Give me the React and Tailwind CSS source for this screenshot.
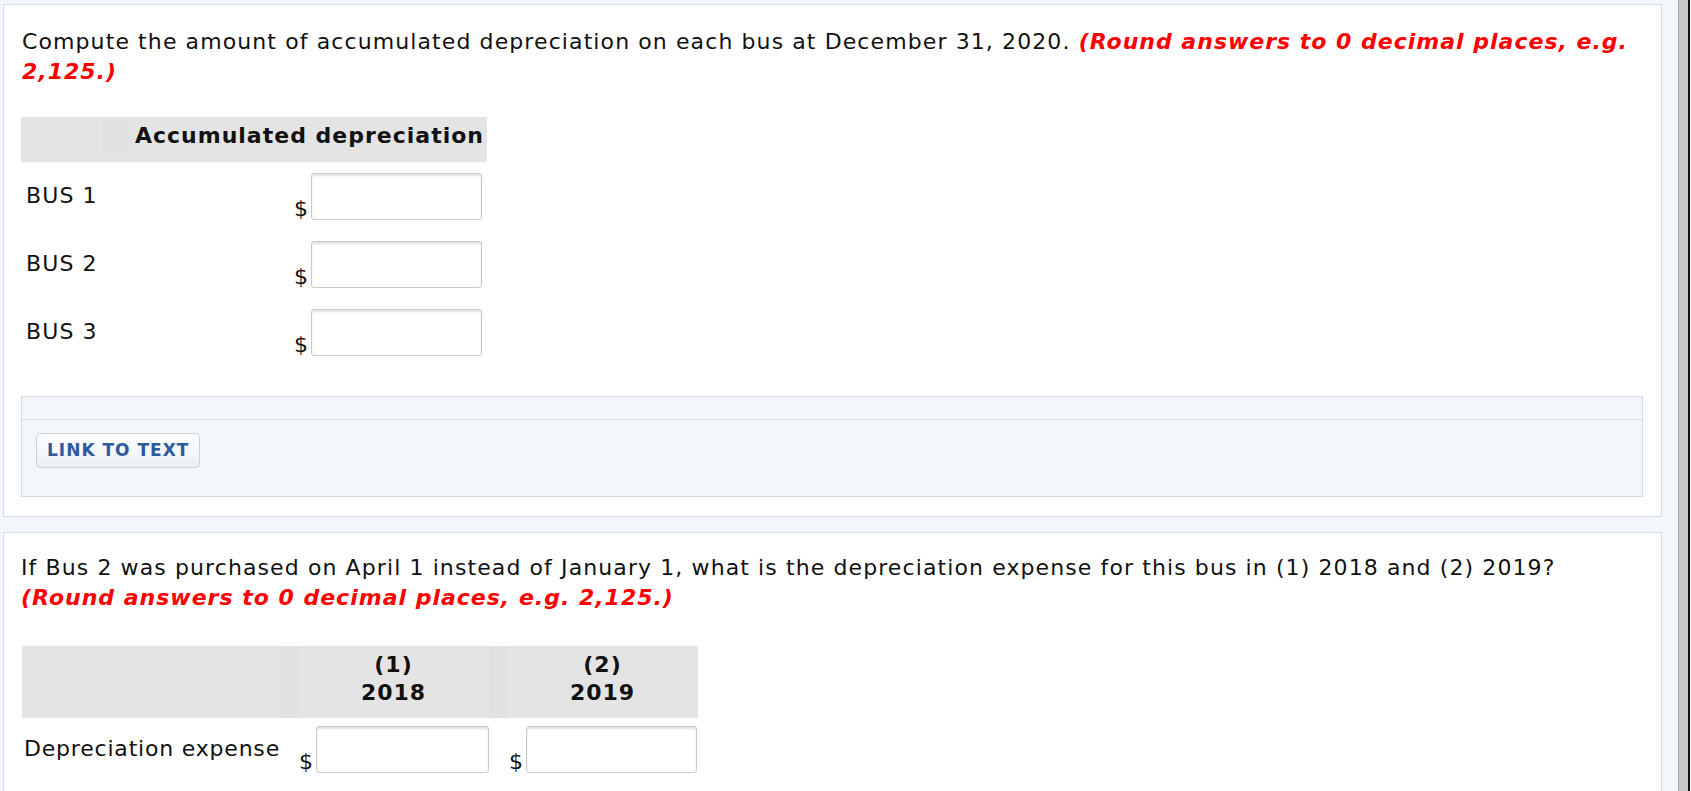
export default function App() {
  const Input = ({ w }) => (
    <div
      className={`h-[47px] ${w} rounded-[3px] border border-[#c9c9c9] bg-white shadow-[inset_0_2px_2px_rgba(0,0,0,0.12)]`}
    />
  );
  const Dollar = () => <span className="w-[14px] leading-none tracking-normal">$</span>;

  return (
    <div className="flex h-[791px] w-[1691px] overflow-hidden bg-[#f4f7fa] font-['DejaVu_Sans',Verdana,sans-serif] text-[22px] leading-[30px] tracking-[1.1px] text-[#111]">
      <div className="flex min-w-0 flex-1 flex-col gap-[15px] pl-[3px] pr-[16px] pt-[4px]">
        {/* Panel 1 */}
        <div className="border border-[#d5dde7] bg-white pb-[19px] pl-[17px] pr-[18px] pt-[22px]">
          <p className="pl-[1px]">
            <span className="whitespace-nowrap">
              Compute the amount of accumulated depreciation on each bus at December 31, 2020.{" "}
              <span className="font-bold italic tracking-[1px] text-[#ff0000]">
                (Round answers to 0 decimal places, e.g.
              </span>
            </span>
            <br />
            <span className="font-bold italic tracking-[1px] text-[#ff0000]">2,125.)</span>
          </p>

          <div className="mt-[30px] w-[466px]">
            <div className="flex bg-[#e4e4e4] pb-[12px] pt-[5px] font-bold leading-[28px] tracking-[1px]">
              <div className="w-[82px]" />
              <div className="w-[25px] bg-[#e1e1e1]" />
              <div className="flex-1 pr-[3px] text-right">Accumulated depreciation</div>
            </div>
            {["BUS 1", "BUS 2", "BUS 3"].map((b) => (
              <div key={b} className="flex h-[68px] items-center">
                <div className="w-[273px] shrink-0 pl-[5px]">{b}</div>
                <div className="flex shrink-0 items-end">
                  <Dollar />
                  <div className="ml-[3px]">
                    <Input w="w-[171px]" />
                  </div>
                </div>
              </div>
            ))}
          </div>

          <div className="mt-[30px] border border-[#d3dce6] bg-[#f4f7fa]">
            <div className="h-[23px] border-b border-[#d3dce6]" />
            <div className="pb-[28px] pl-[14px] pt-[13px]">
              <button className="flex h-[35px] items-center rounded-[4px] border border-[#cbd2da] bg-gradient-to-b from-white to-[#eceff3] px-[10px] text-[17px] font-bold leading-none tracking-[1px] text-[#2c5a9c]">
                LINK TO TEXT
              </button>
            </div>
          </div>
        </div>

        {/* Panel 2 */}
        <div className="h-[400px] flex-none border border-[#d5dde7] bg-white pl-[17px] pr-[18px] pt-[20px]">
          <p>
            <span className="whitespace-nowrap">
              If Bus 2 was purchased on April 1 instead of January 1, what is the depreciation expense for this bus in (1) 2018 and (2) 2019?
            </span>
            <br />
            <span className="font-bold italic tracking-[1px] text-[#ff0000]">(Round answers to 0 decimal places, e.g. 2,125.)</span>
          </p>

          <div className="ml-[1px] mt-[33px] w-[676px]">
            <div className="flex bg-[#e4e4e4] font-bold leading-[28px] tracking-[1px]">
              <div className="w-[258px] shrink-0" />
              <div className="w-[18px] shrink-0 bg-[#e1e1e1]" />
              <div className="w-[191px] shrink-0 pb-[11px] pt-[5px] text-center">
                (1)
                <br />
                2018
              </div>
              <div className="w-[18px] shrink-0 bg-[#e1e1e1]" />
              <div className="w-[191px] shrink-0 pb-[11px] pt-[5px] text-center">
                (2)
                <br />
                2019
              </div>
            </div>
            <div className="flex h-[62px] items-center">
              <div className="w-[261px] shrink-0 whitespace-nowrap pl-[2px] tracking-[0.8px]">Depreciation expense</div>
              <div className="flex w-[224px] shrink-0 items-end pl-[16px]">
                <Dollar />
                <div className="ml-[3px]">
                  <Input w="w-[173px]" />
                </div>
              </div>
              <div className="flex w-[191px] shrink-0 items-end pl-[2px]">
                <Dollar />
                <div className="ml-[3px]">
                  <Input w="w-[171px]" />
                </div>
              </div>
            </div>
          </div>
        </div>
      </div>
      <div className="w-[10px] border-l border-[#a9a9a9] bg-[#c8c8c8]" />
      <div className="w-[2px] bg-[#111]" />
      <div className="w-[1px] bg-[#f4f7fa]" />
    </div>
  );
}
